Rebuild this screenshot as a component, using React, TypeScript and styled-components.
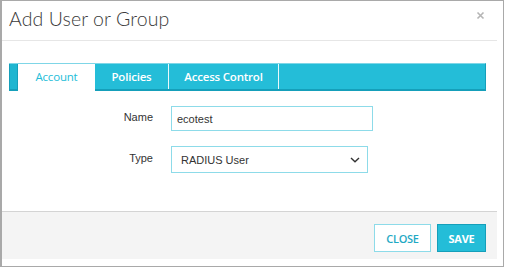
import React from "react";
import styled, { createGlobalStyle } from "styled-components";

const Global = createGlobalStyle`
  html, body { margin: 0; padding: 0; background: #ffffff; }
  * { box-sizing: border-box; }
`;

const TEAL = "#24bdd8";
const TEAL_DARK = "#159fba";
const TEAL_LIGHT = "#8ddbe9";

const Frame = styled.div`
  width: 504px;
  height: 267px;
  border: 1px solid #a9a9a9;
  border-left-width: 2px;
  padding: 0 6px 7px 0;
  display: flex;
  flex-direction: column;
  background: #fff;
`;

const Header = styled.div`
  height: 40px;
  border-bottom: 1px solid #e6e6e6;
  display: flex;
  justify-content: space-between;
  align-items: flex-start;
  padding: 4px 12px 0 7px;
`;

const Title = styled.h1`
  margin: 0;
  font-family: "Lato", "Noto Sans", sans-serif;
  font-weight: 300;
  font-size: 19.5px;
  line-height: 28px;
  color: #3a3a3a;
  letter-spacing: 0.1px;
`;

const CloseX = styled.button`
  border: 0;
  background: transparent;
  padding: 0;
  margin-top: 6px;
  width: 9px;
  height: 9px;
  display: flex;
  cursor: pointer;
`;

const Body = styled.div`
  flex: 1;
  padding: 22px 11px 0 7px;
`;

const TabBar = styled.div`
  display: flex;
  height: 28px;
  background: ${TEAL};
  border-top: 1px solid #7fd6e7;
  border-bottom: 2px solid ${TEAL_DARK};
  border-right: 1px solid ${TEAL_DARK};
`;

const TabLead = styled.div`
  width: 9px;
  background: #1fb6d1;
  border-left: 1px solid ${TEAL_DARK};
  border-right: 1px solid ${TEAL_DARK};
`;

const Tab = styled.div<{ $active?: boolean; $w: number }>`
  width: ${(p) => p.$w}px;
  display: flex;
  align-items: center;
  justify-content: center;
  font-family: "Open Sans", "Noto Sans", sans-serif;
  font-size: 11.5px;
  letter-spacing: -0.2px;
  padding-bottom: 1px;
  ${(p) =>
    p.$active
      ? `
    background: #fff;
    color: ${TEAL};
    font-weight: 400;
    margin-bottom: -2px;
    padding-bottom: 3px;
  `
      : `
    color: #fff;
    font-weight: 600;
    border-right: 1px solid #e9f8fb;
  `}
`;

const Form = styled.div`
  display: grid;
  grid-template-columns: 144px auto;
  column-gap: 18px;
  row-gap: 15px;
  margin-top: 15px;
  justify-items: start;
`;

const Label = styled.label`
  justify-self: end;
  align-self: center;
  margin-top: -3px;
  font-family: "Liberation Sans", Arial, sans-serif;
  font-size: 11px;
  color: #333;
`;

const Input = styled.input`
  width: 202px;
  height: 25px;
  border: 1px solid ${TEAL_LIGHT};
  padding: 0 5px;
  font-family: "Liberation Sans", Arial, sans-serif;
  font-size: 11px;
  color: #333;
  outline: none;
`;

const Select = styled.div`
  width: 197px;
  height: 27px;
  border: 1px solid ${TEAL_LIGHT};
  display: flex;
  align-items: center;
  justify-content: space-between;
  padding: 0 7px 0 9px;
  font-family: "Liberation Sans", Arial, sans-serif;
  font-size: 11px;
  color: #333;
`;

const Footer = styled.div`
  height: 48px;
  border-top: 1px solid #d4d4d4;
  background: #f4f4f4;
  display: flex;
  justify-content: flex-end;
  align-items: flex-start;
  gap: 6px;
  padding: 12px 11px 0 0;
`;

const Button = styled.button<{ $primary?: boolean }>`
  height: 28px;
  padding: 0;
  width: ${(p) => (p.$primary ? 49 : 57)}px;
  font-family: "Open Sans", "Noto Sans", sans-serif;
  font-size: 11px;
  font-weight: ${(p) => (p.$primary ? 700 : 600)};
  letter-spacing: -0.3px;
  cursor: pointer;
  background: ${(p) => (p.$primary ? TEAL : "#fff")};
  color: ${(p) => (p.$primary ? "#fff" : "#1fa9c4")};
  border: 1px solid ${(p) => (p.$primary ? TEAL_DARK : TEAL_LIGHT)};
`;

export default function App() {
  return (
    <>
      <Global />
      <Frame>
        <Header>
          <Title>Add User or Group</Title>
          <CloseX aria-label="close">
            <svg width="9" height="9" viewBox="0 0 9 9">
              <path d="M1.5 1.5 L7.5 7.5 M7.5 1.5 L1.5 7.5" stroke="#b5b5b5" strokeWidth="1.6" />
            </svg>
          </CloseX>
        </Header>
        <Body>
          <TabBar>
            <TabLead />
            <Tab $active $w={77}>Account</Tab>
            <Tab $w={74}>Policies</Tab>
            <Tab $w={110}>Access Control</Tab>
          </TabBar>
          <Form>
            <Label>Name</Label>
            <Input defaultValue="ecotest" />
            <Label>Type</Label>
            <Select>
              <span>RADIUS User</span>
              <svg width="10" height="6" viewBox="0 0 10 6">
                <path d="M1 1 L5 4.8 L9 1" fill="none" stroke="#333" strokeWidth="1.4" />
              </svg>
            </Select>
          </Form>
        </Body>
        <Footer>
          <Button>CLOSE</Button>
          <Button $primary>SAVE</Button>
        </Footer>
      </Frame>
    </>
  );
}
